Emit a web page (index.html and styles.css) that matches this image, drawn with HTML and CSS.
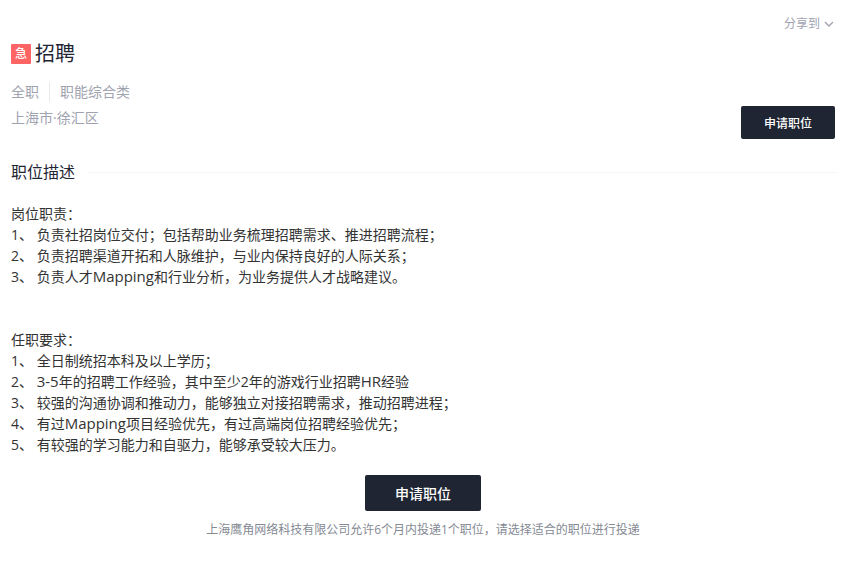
FILE: index.html
```html
<!DOCTYPE html>
<html lang="zh-CN">
<head>
    <meta charset="UTF-8">
    <title>招聘</title>
    <link rel="stylesheet" href="styles.css">
</head>
<body>
    <div class="job">
        <div class="share-row">
            <span class="share">分享到
                <svg class="share-arrow" width="10" height="6" viewBox="0 0 10 6"><path d="M1 1l4 4 4-4" fill="none" stroke="#9fa3b0" stroke-width="1.3"/></svg>
            </span>
        </div>
        <div class="head">
            <div class="head-info">
                <h1 class="title"><span class="urgent">急</span>招聘</h1>
                <div class="tags">
                    <span class="tag">全职</span>
                    <span class="tag">职能综合类</span>
                </div>
                <div class="place">上海市·徐汇区</div>
            </div>
            <button class="button button-small">申请职位</button>
        </div>
        <div class="section-head">
            <h2>职位描述</h2>
            <div class="section-line"></div>
        </div>
        <div class="desc">
            <p>岗位职责：</p>
            <p>1、 负责社招岗位交付；包括帮助业务梳理招聘需求、推进招聘流程；</p>
            <p>2、 负责招聘渠道开拓和人脉维护，与业内保持良好的人际关系；</p>
            <p>3、 负责人才<span class="latin">Mapping</span>和行业分析，为业务提供人才战略建议。</p>
            <p>&nbsp;</p>
            <p>&nbsp;</p>
            <p>任职要求：</p>
            <p>1、 全日制统招本科及以上学历；</p>
            <p>2、 <span class="latin">3-5</span>年的招聘工作经验，其中至少2年的游戏行业招聘<span class="latin">HR</span>经验</p>
            <p>3、 较强的沟通协调和推动力，能够独立对接招聘需求，推动招聘进程；</p>
            <p>4、 有过<span class="latin">Mapping</span>项目经验优先，有过高端岗位招聘经验优先；</p>
            <p>5、 有较强的学习能力和自驱力，能够承受较大压力。</p>
        </div>
        <div class="foot">
            <button class="button button-large">申请职位</button>
            <p class="foot-note">上海鹰角网络科技有限公司允许6个月内投递1个职位，请选择适合的职位进行投递</p>
        </div>
    </div>
</body>
</html>
```

FILE: styles.css
```css
body {
    font-family: "Open Sans", "Noto Sans CJK SC", sans-serif;
    background: white;
    color: #333;
    margin: 0;
}
.job {
    padding: 15px 25px 0 11px;
}
.share-row {
    display: flex;
    justify-content: flex-end;
    height: 18px;
}
.share {
    margin-right: 1px;
    font-size: 12px;
    line-height: 18px;
    color: #9fa3b0;
}
.share-arrow {
    margin-left: 1px;
    vertical-align: 1px;
}
.head {
    display: flex;
    justify-content: space-between;
    align-items: flex-end;
    margin-top: 9px;
}
.head-info {
    margin-bottom: 11px;
}
.title {
    display: flex;
    align-items: center;
    margin: 0;
    font-size: 20px;
    font-weight: 400;
    line-height: 24px;
    color: #1f2533;
}
.urgent {
    width: 20px;
    height: 20px;
    margin-right: 4px;
    background: #ff6464;
    border-radius: 1px;
    color: white;
    font-size: 12px;
    font-weight: 500;
    line-height: 20px;
    text-align: center;
}
.tags {
    display: flex;
    align-items: center;
    margin-top: 16px;
    font-size: 14px;
    line-height: 20px;
    color: #9fa3b0;
}
.tag + .tag {
    margin-left: 10px;
    padding-left: 10px;
    border-left: 1px solid #e6e8ee;
}
.place {
    margin-top: 6px;
    font-size: 14px;
    line-height: 20px;
    color: #9fa3b0;
}
.button {
    padding: 0;
    background-color: #1f2533;
    color: white;
    border: none;
    border-radius: 2px;
    font-family: inherit;
    font-weight: 500;
}
.button-small {
    width: 94px;
    height: 33px;
    font-size: 12px;
}
.button-large {
    width: 116px;
    height: 36px;
    font-size: 14px;
}
.section-head {
    display: flex;
    align-items: center;
    margin-top: 21px;
    margin-right: -2px;
}
.section-head h2 {
    margin: 0;
    font-size: 16px;
    font-weight: 400;
    line-height: 24px;
    color: #1f2533;
}
.section-line {
    flex: 1;
    height: 1px;
    margin-left: 12px;
    background: #f5f6f8;
}
.desc {
    margin-top: 19px;
    font-size: 14px;
    line-height: 21px;
}
.desc p {
    margin: 0;
}
.latin {
    font-size: 15px;
    line-height: 1;
}
.foot {
    display: flex;
    flex-direction: column;
    align-items: center;
    margin-top: 20px;
}
.foot-note {
    margin: 10px 0 0;
    font-size: 12px;
    line-height: 18px;
    color: #858a94;
}
```
